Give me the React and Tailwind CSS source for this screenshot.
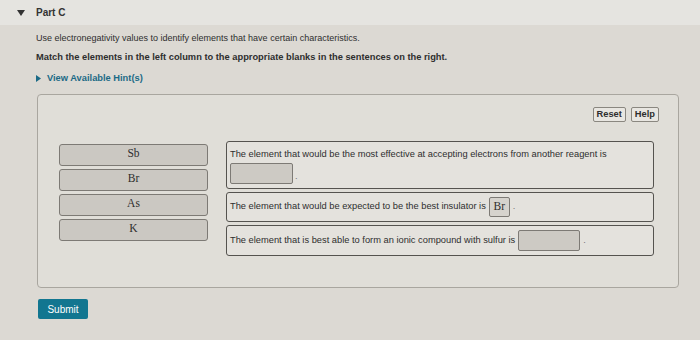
export default function App() {
  const sans = { fontFamily: '"Liberation Sans", Arial, sans-serif' };
  const serif = { fontFamily: '"Liberation Serif", "Times New Roman", serif' };
  const tiles = ["Sb", "Br", "As", "K"];
  return (
    <div className="w-[700px] h-[340px] overflow-hidden bg-[#dcd9d3] text-[#2e2e2e]" style={sans}>
      <div className="h-[25px] bg-[#e5e4e0] flex items-center pl-[17px] gap-[11px]">
        <svg width="8" height="6" viewBox="0 0 8 6"><path d="M0 0h8L4 6z" fill="#333" /></svg>
        <span className="text-[10px] font-bold text-[#333]">Part C</span>
      </div>
      <div className="pl-[36px] pt-[8px]">
        <p className="text-[9px] leading-[11px]">Use electronegativity values to identify elements that have certain characteristics.</p>
        <p className="text-[9.3px] leading-[11px] font-bold mt-[8px]">Match the elements in the left column to the appropriate blanks in the sentences on the right.</p>
        <div className="flex items-center gap-[6px] mt-[10px] text-[#1b6a86]">
          <svg width="5" height="7" viewBox="0 0 5 7"><path d="M0 0l5 3.5L0 7z" fill="#1b6a86" /></svg>
          <span className="text-[9.3px] leading-[11px] font-bold">View Available Hint(s)</span>
        </div>
      </div>
      <div className="ml-[37px] mt-[10px] w-[642px] h-[194px] border border-[#a9a69f] rounded-[4px] bg-[#e0ded8] flex flex-col">
        <div className="flex justify-end gap-[5px] pt-[12px] pr-[19px]">
          <div className="h-[15px] px-[3px] border border-[#8a8780] rounded-[2px] bg-[#e8e6e1] text-[9.3px] font-bold flex items-center">Reset</div>
          <div className="h-[15px] px-[3px] border border-[#8a8780] rounded-[2px] bg-[#e8e6e1] text-[9.3px] font-bold flex items-center">Help</div>
        </div>
        <div className="flex mt-[19px] pl-[21px]">
          <div className="w-[149px] flex flex-col gap-[3px] pt-[3px]">
            {tiles.map((t) => (
              <div key={t} className="h-[22px] border border-[#7d7a75] rounded-[3px] bg-[#cbc8c2] text-[11.5px] leading-[13px] flex justify-center pt-[2px]" style={serif}>
                {t}
              </div>
            ))}
          </div>
          <div className="ml-[18px] w-[428px] flex flex-col gap-[3px] text-[9.3px]">
            <div className="h-[48px] border border-[#55534f] rounded-[3px] bg-[#e4e2dd] pl-[3px] pt-[7px]">
              <div className="leading-[11px]">The element that would be the most effective at accepting electrons from another reagent is</div>
              <div className="flex items-end mt-[3px]">
                <div className="w-[63px] h-[21px] border border-[#7d7a75] rounded-[2px] bg-[#cdcac4]"></div>
                <span className="ml-[2px] text-[#777]">.</span>
              </div>
            </div>
            <div className="h-[30px] border border-[#55534f] rounded-[3px] bg-[#e4e2dd] pl-[3px] flex items-center">
              <span>The element that would be expected to be the best insulator is</span>
              <div className="ml-[3px] w-[21px] h-[20px] border border-[#7d7a75] rounded-[2px] bg-[#d6d3cd] text-[11.5px] flex items-center justify-center" style={serif}>Br</div>
              <span className="ml-[3px] text-[#777]">.</span>
            </div>
            <div className="h-[31px] border border-[#55534f] rounded-[3px] bg-[#e4e2dd] pl-[3px] flex items-center">
              <span>The element that is best able to form an ionic compound with sulfur is</span>
              <div className="ml-[3px] w-[62px] h-[21px] border border-[#7d7a75] rounded-[2px] bg-[#cdcac4]"></div>
              <span className="ml-[3px] text-[#777]">.</span>
            </div>
          </div>
        </div>
      </div>
      <div className="ml-[38px] mt-[11px] w-[50px] h-[20px] bg-[#127690] rounded-[2px] text-white text-[10px] flex items-center justify-center">Submit</div>
    </div>
  );
}
